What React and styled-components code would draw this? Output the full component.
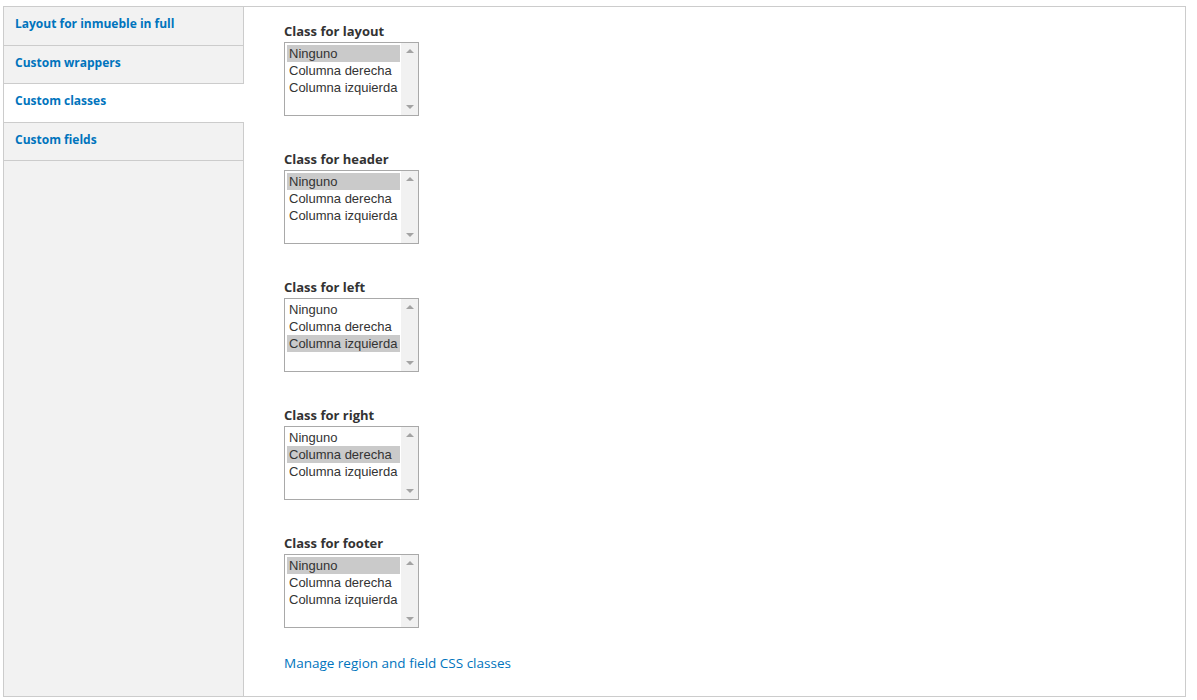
import React from 'react';
import styled, { createGlobalStyle } from 'styled-components';

const GlobalStyle = createGlobalStyle`
  html, body {
    margin: 0;
    padding: 0;
    background: #fff;
  }
  body {
    font-family: "Open Sans", "Liberation Sans", sans-serif;
    color: #333;
  }
`;

const tabs = [
  { label: 'Layout for inmueble in full' },
  { label: 'Custom wrappers' },
  { label: 'Custom classes', active: true },
  { label: 'Custom fields' },
];

const options = ['Ninguno', 'Columna derecha', 'Columna izquierda'];

const fields = [
  { label: 'Class for layout', selected: 0 },
  { label: 'Class for header', selected: 0 },
  { label: 'Class for left', selected: 2 },
  { label: 'Class for right', selected: 1 },
  { label: 'Class for footer', selected: 0 },
];

// styled
const Page = styled.div`
  padding: 6px 11px 3px 3px;
`;

const VerticalTabs = styled.div`
  display: flex;
  border: 1px solid #ccc;
  background: #fff;
`;

const TabList = styled.ul`
  list-style: none;
  margin: 0;
  padding: 0;
  width: 239px;
  flex: none;
  background: #f2f2f2;
  border-right: 1px solid #ccc;
`;

const TabItem = styled.li`
  border-bottom: 1px solid #ccc;
  background: ${props => (props.$active ? '#fff' : 'transparent')};
  margin-right: ${props => (props.$active ? '-1px' : '0')};
  position: relative;
`;

const TabLink = styled.a`
  display: block;
  padding: 8px 11px 12px;
  line-height: 17.5px;
  font-size: 12px;
  font-weight: 700;
  color: #0074bd;
  text-decoration: none;
  cursor: pointer;
`;

const Panel = styled.div`
  flex: 1;
  padding: 15px 40px 24px 40px;
`;

const FormItem = styled.div`
  margin-bottom: 34px;
`;

const Label = styled.label`
  display: block;
  font-size: 13px;
  font-weight: 700;
  line-height: 18px;
  color: #333;
  margin-bottom: 2px;
`;

const ListBox = styled.div`
  display: flex;
  width: 133px;
  height: 72px;
  border: 1px solid #a9a9a9;
  background: #fff;
`;

const Options = styled.div`
  flex: 1;
  padding: 2px 1px 2px 2px;
`;

const Option = styled.div`
  font-family: "Liberation Sans", Arial, sans-serif;
  font-size: 13px;
  line-height: 17px;
  height: 17px;
  padding-left: 2px;
  color: #333;
  white-space: nowrap;
  background: ${props => (props.$selected ? '#cacaca' : 'transparent')};
`;

const ScrollTrack = styled.div`
  width: 17px;
  flex: none;
  background: #f1f1f1;
  display: flex;
  flex-direction: column;
  justify-content: space-between;
  align-items: center;
  padding: 6px 0;
  box-sizing: border-box;
`;

const Arrow = styled.span`
  width: 0;
  height: 0;
  border-left: 4px solid transparent;
  border-right: 4px solid transparent;
  ${props =>
    props.$down
      ? 'border-top: 4px solid #a3a3a3;'
      : 'border-bottom: 4px solid #a3a3a3;'}
`;

const LinkRow = styled.div`
  margin-top: -9px;
  line-height: 18px;
`;

const ManageLink = styled.a`
  font-size: 13.5px;
  color: #0074bd;
  text-decoration: none;
  cursor: pointer;
`;

const SelectField = ({ label, selected }) => (
  <FormItem>
    <Label>{label}</Label>
    <ListBox>
      <Options>
        {options.map((o, i) => (
          <Option key={o} $selected={i === selected}>
            {o}
          </Option>
        ))}
      </Options>
      <ScrollTrack>
        <Arrow />
        <Arrow $down />
      </ScrollTrack>
    </ListBox>
  </FormItem>
);

const App = () => (
  <Page>
    <GlobalStyle />
    <VerticalTabs>
      <TabList>
        {tabs.map(t => (
          <TabItem key={t.label} $active={t.active}>
            <TabLink>{t.label}</TabLink>
          </TabItem>
        ))}
      </TabList>
      <Panel>
        {fields.map(f => (
          <SelectField key={f.label} label={f.label} selected={f.selected} />
        ))}
        <LinkRow>
          <ManageLink>Manage region and field CSS classes</ManageLink>
        </LinkRow>
      </Panel>
    </VerticalTabs>
  </Page>
);

export default App;
